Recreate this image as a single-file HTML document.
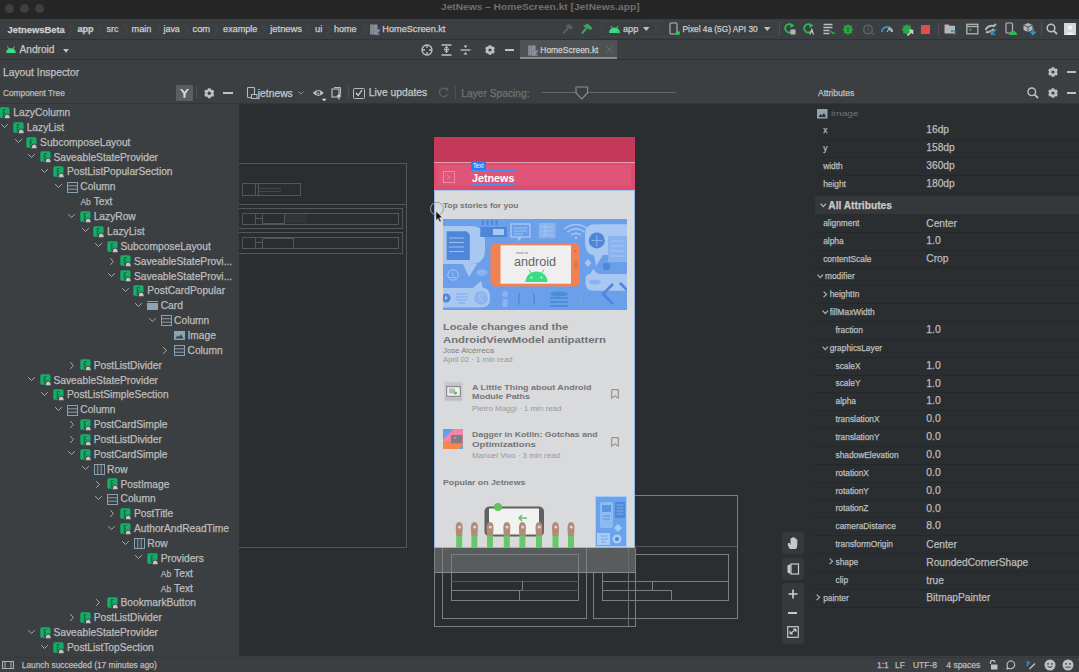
<!DOCTYPE html><html><head><meta charset="utf-8"><style>
html,body{margin:0;padding:0;width:1079px;height:672px;overflow:hidden;background:#2b2d30}
.r{position:absolute;display:block}
.t{position:absolute;white-space:nowrap;line-height:1;font-family:"Liberation Sans",sans-serif;-webkit-text-stroke:0.25px currentColor}
</style></head><body>
<div class="r" style="left:0px;top:0px;width:1079px;height:19px;background:#262626;"></div>
<div class="r" style="left:0px;top:19px;width:1079px;height:20px;background:#3c3f41;"></div>
<div class="r" style="left:0px;top:39px;width:1079px;height:1px;background:#2f3133;"></div>
<div class="r" style="left:0px;top:40px;width:1079px;height:19px;background:#3c3f41;"></div>
<div class="r" style="left:0px;top:59px;width:1079px;height:1px;background:#2f3133;"></div>
<div class="r" style="left:0px;top:60px;width:1079px;height:43px;background:#3c3f41;"></div>
<div class="r" style="left:0px;top:103px;width:239px;height:553px;background:#3c3f41;"></div>
<div class="r" style="left:239px;top:103px;width:574px;height:553px;background:#2b2e31;"></div>
<div class="r" style="left:813px;top:103px;width:266px;height:553px;background:#2b2e31;"></div>
<div class="r" style="left:0px;top:656px;width:1079px;height:16px;background:#3c3f41;"></div>
<div class="r" style="left:4.5px;top:3.7px;width:9px;height:9px;border-radius:50%;background:#3f3f3f"></div>
<div class="r" style="left:19.5px;top:3.7px;width:9px;height:9px;border-radius:50%;background:#3f3f3f"></div>
<div class="r" style="left:34.5px;top:3.7px;width:9px;height:9px;border-radius:50%;background:#3f3f3f"></div>
<div class="t" style="left:440.5px;top:3.40px;font-size:9.33px;color:#6f6f6f;font-weight:bold;transform:scaleX(1.091);transform-origin:0 0;-webkit-text-stroke:0;">JetNews – HomeScreen.kt [JetNews.app]</div>
<div class="t" style="left:7.5px;top:25.04px;font-size:9.4px;color:#cdcdcd;font-weight:bold;">JetnewsBeta</div>
<div class="t" style="left:77.5px;top:25.38px;font-size:9.0px;color:#cdcdcd;font-weight:bold;">app</div>
<div class="t" style="left:106.5px;top:25.38px;font-size:9.0px;color:#cdcdcd;">src</div>
<div class="t" style="left:131.5px;top:25.21px;font-size:9.2px;color:#cdcdcd;">main</div>
<div class="t" style="left:163.5px;top:25.47px;font-size:8.9px;color:#cdcdcd;">java</div>
<div class="t" style="left:192.5px;top:25.09px;font-size:9.35px;color:#cdcdcd;">com</div>
<div class="t" style="left:223.1px;top:25.34px;font-size:9.05px;color:#cdcdcd;">example</div>
<div class="t" style="left:270.3px;top:25.09px;font-size:9.35px;color:#cdcdcd;">jetnews</div>
<div class="t" style="left:315.0px;top:25.13px;font-size:9.3px;color:#cdcdcd;">ui</div>
<div class="t" style="left:333.9px;top:25.35px;font-size:9.04px;color:#cdcdcd;">home</div>
<div class="t" style="left:382.3px;top:25.24px;font-size:9.17px;color:#cdcdcd;">HomeScreen.kt</div>
<svg class="r" style="left:68px;top:24px;" width="6" height="11" viewBox="0 0 6 11"><path d="M1 1 L4.5 5.5 L1 10" stroke="#4b4e51" stroke-width="0.9" fill="none"/></svg>
<svg class="r" style="left:97px;top:24px;" width="6" height="11" viewBox="0 0 6 11"><path d="M1 1 L4.5 5.5 L1 10" stroke="#4b4e51" stroke-width="0.9" fill="none"/></svg>
<svg class="r" style="left:123px;top:24px;" width="6" height="11" viewBox="0 0 6 11"><path d="M1 1 L4.5 5.5 L1 10" stroke="#4b4e51" stroke-width="0.9" fill="none"/></svg>
<svg class="r" style="left:156px;top:24px;" width="6" height="11" viewBox="0 0 6 11"><path d="M1 1 L4.5 5.5 L1 10" stroke="#4b4e51" stroke-width="0.9" fill="none"/></svg>
<svg class="r" style="left:184px;top:24px;" width="6" height="11" viewBox="0 0 6 11"><path d="M1 1 L4.5 5.5 L1 10" stroke="#4b4e51" stroke-width="0.9" fill="none"/></svg>
<svg class="r" style="left:214px;top:24px;" width="6" height="11" viewBox="0 0 6 11"><path d="M1 1 L4.5 5.5 L1 10" stroke="#4b4e51" stroke-width="0.9" fill="none"/></svg>
<svg class="r" style="left:261px;top:24px;" width="6" height="11" viewBox="0 0 6 11"><path d="M1 1 L4.5 5.5 L1 10" stroke="#4b4e51" stroke-width="0.9" fill="none"/></svg>
<svg class="r" style="left:305px;top:24px;" width="6" height="11" viewBox="0 0 6 11"><path d="M1 1 L4.5 5.5 L1 10" stroke="#4b4e51" stroke-width="0.9" fill="none"/></svg>
<svg class="r" style="left:326px;top:24px;" width="6" height="11" viewBox="0 0 6 11"><path d="M1 1 L4.5 5.5 L1 10" stroke="#4b4e51" stroke-width="0.9" fill="none"/></svg>
<svg class="r" style="left:362px;top:24px;" width="6" height="11" viewBox="0 0 6 11"><path d="M1 1 L4.5 5.5 L1 10" stroke="#4b4e51" stroke-width="0.9" fill="none"/></svg>
<svg class="r" style="left:369px;top:23px;" width="12" height="13" viewBox="0 0 12 13"><path d="M1 1.5 H8.5 V11.5 H1Z" fill="#8e9296"/><path d="M2 1.5v10M4.5 1.5v10" stroke="#6d7175" stroke-width="0.7"/><path d="M5.8 6.6 H11 L5.8 12Z" fill="#26a3f0"/><path d="M11 6.6 L11 6.6 L5.8 12 V10 L9.2 6.6Z" fill="#f08030"/><path d="M5.8 12 L11 6.6 V8 L7.2 12Z" fill="#e64a72"/><path d="M5.8 12 L8.5 9.3 L11 12Z" fill="#26a3f0"/></svg>
<svg class="r" style="left:562px;top:23px;" width="13" height="12" viewBox="0 0 13 12"><path d="M3 3 L7 0.8 L11 4.5 L9 6.5 Z" fill="#5b5e61"/><path d="M6 5 L1.5 10.5" stroke="#5b5e61" stroke-width="2"/></svg>
<svg class="r" style="left:580px;top:23px;" width="14" height="12" viewBox="0 0 14 12"><path d="M3 3 L7.5 0.5 L12.5 5 L10.5 7 Z" fill="#3aa55b"/><path d="M6.5 5 L2 10.5" stroke="#3aa55b" stroke-width="2.2"/></svg>
<div class="r" style="left:601px;top:21px;width:55px;height:16px;box-sizing:border-box;border:1px solid #47494c;border-style:dotted;"></div>
<svg class="r" style="left:608px;top:24px;" width="13" height="10" viewBox="0 0 13 10"><path d="M1 9 A5.5 5.5 0 0 1 12 9Z" fill="#3ddc84"/><path d="M3 2 L4.5 4.5M10 2 L8.5 4.5" stroke="#3ddc84" stroke-width="1"/><circle cx="10.5" cy="8" r="1.6" fill="#1fd34a"/></svg>
<div class="t" style="left:623px;top:24.71px;font-size:9.2px;color:#cdcdcd;">app</div>
<svg class="r" style="left:643px;top:27px;" width="7" height="5" viewBox="0 0 7 5"><path d="M0 0 H6.5 L3.25 4Z" fill="#c0c0c0"/></svg>
<div class="r" style="left:657px;top:21px;width:121px;height:16px;box-sizing:border-box;border:1px solid #47494c;border-style:dotted;"></div>
<svg class="r" style="left:669px;top:22px;" width="12" height="14" viewBox="0 0 12 14"><rect x="1" y="1" width="7" height="11" rx="1" fill="none" stroke="#b9b9b9" stroke-width="1.1"/><circle cx="9" cy="11" r="2" fill="#1fd34a"/></svg>
<div class="t" style="left:682.5px;top:25.47px;font-size:8.31px;color:#cdcdcd;">Pixel 4a (5G) API 30</div>
<svg class="r" style="left:764px;top:27px;" width="7" height="5" viewBox="0 0 7 5"><path d="M0 0 H6.5 L3.25 4Z" fill="#c0c0c0"/></svg>
<div class="r" style="left:779px;top:22px;width:1px;height:14px;background:#4e5154;"></div>
<svg class="r" style="left:784px;top:23px;" width="12" height="12" viewBox="0 0 12 12"><path d="M8.5 2.5 A4.2 4.2 0 1 0 9.3 6.8" stroke="#2eb84f" stroke-width="1.8" fill="none"/><path d="M6 0 L10.5 2.6 L6.5 5Z" fill="#2eb84f"/><rect x="6.5" y="6.5" width="5" height="5" fill="#b5b5b5"/></svg>
<svg class="r" style="left:803px;top:23px;" width="12" height="12" viewBox="0 0 12 12"><path d="M8.5 2.5 A4.2 4.2 0 1 0 9.3 6.8" stroke="#2eb84f" stroke-width="1.8" fill="none"/><path d="M6 0 L10.5 2.6 L6.5 5Z" fill="#2eb84f"/><path d="M7 11.5 L8.8 6.5 L10.6 11.5" stroke="#c5c5c5" stroke-width="1.2" fill="none"/></svg>
<svg class="r" style="left:823px;top:23px;" width="13" height="12" viewBox="0 0 13 12"><path d="M0.5 1.5h9M0.5 4.5h9M0.5 7.5h6M0.5 10.5h6" stroke="#bdbdbd" stroke-width="1.5"/><path d="M8 8 Q9 11 12 10" stroke="#2eb84f" stroke-width="1.3" fill="none"/></svg>
<svg class="r" style="left:842px;top:23px;" width="12" height="13" viewBox="0 0 12 13"><path d="M6.00 0.90 L7.53 2.80 L9.96 2.54 L9.70 4.97 L11.60 6.50 L9.70 8.03 L9.96 10.46 L7.53 10.20 L6.00 12.10 L4.47 10.20 L2.04 10.46 L2.30 8.03 L0.40 6.50 L2.30 4.97 L2.04 2.54 L4.47 2.80Z" fill="#28a745"/><path d="M6 4v5" stroke="#17692b" stroke-width="1.2"/></svg>
<svg class="r" style="left:862px;top:23px;" width="13" height="12" viewBox="0 0 13 12"><circle cx="6" cy="6.5" r="4.3" stroke="#5f6265" stroke-width="1.6" fill="none"/><path d="M6 4.5v2.2l1.8 1.2" stroke="#5f6265" stroke-width="1" fill="none"/><path d="M9 9.5 L12 11.5" stroke="#5f6265" stroke-width="1.4"/></svg>
<svg class="r" style="left:881px;top:23px;" width="12" height="12" viewBox="0 0 12 12"><path d="M1 9 A5 5 0 0 1 11 9" stroke="#3592c4" stroke-width="2" fill="none"/><path d="M6 9 L9 4" stroke="#b5b5b5" stroke-width="1.2"/><path d="M8 6 A3 3 0 0 1 11 9" stroke="#b5b5b5" stroke-width="2" fill="none"/></svg>
<svg class="r" style="left:901px;top:23px;" width="13" height="13" viewBox="0 0 13 13"><path d="M6.00 0.90 L7.53 2.80 L9.96 2.54 L9.70 4.97 L11.60 6.50 L9.70 8.03 L9.96 10.46 L7.53 10.20 L6.00 12.10 L4.47 10.20 L2.04 10.46 L2.30 8.03 L0.40 6.50 L2.30 4.97 L2.04 2.54 L4.47 2.80Z" fill="#28a745"/><path d="M6.5 12.5 L11.5 7.5M8 7.5h3.5v3.5" stroke="#d0d0d0" stroke-width="1.6" fill="none"/></svg>
<div class="r" style="left:921px;top:25px;width:8.5px;height:8.5px;background:#db4f4f;"></div>
<div class="r" style="left:938px;top:22px;width:1px;height:14px;background:#4e5154;"></div>
<svg class="r" style="left:944px;top:23px;" width="12" height="12" viewBox="0 0 12 12"><path d="M0.5 1.5h4l1 1.3h5.5v7.7h-10.5z" fill="#b5b5b5"/><rect x="7" y="7" width="2" height="2" fill="#3592c4"/><rect x="9.5" y="9.5" width="2" height="2" fill="#3592c4"/><rect x="9.5" y="7" width="2" height="2" fill="#3592c4"/></svg>
<svg class="r" style="left:966px;top:23px;" width="13" height="12" viewBox="0 0 13 12"><rect x="0.8" y="1.3" width="11" height="9.5" fill="none" stroke="#b5b5b5" stroke-width="1.3"/><path d="M0.8 3.5h11" stroke="#b5b5b5" stroke-width="1.3"/><path d="M3.5 5 L6 6.8 L3.5 8.6Z" fill="#2eb84f"/></svg>
<svg class="r" style="left:985px;top:23px;" width="13" height="12" viewBox="0 0 13 12"><path d="M0.5 7 Q3 2 9 3 L11 1" stroke="#b5b5b5" stroke-width="2" fill="none"/><path d="M1 9 Q5 10 9 6" stroke="#b5b5b5" stroke-width="2" fill="none"/><path d="M6 11.5 L11 6.5M6.5 7.5v4h4" stroke="#3592c4" stroke-width="1.5" fill="none"/></svg>
<svg class="r" style="left:1005px;top:22px;" width="12" height="14" viewBox="0 0 12 14"><rect x="1" y="1" width="6.5" height="10" rx="1" fill="none" stroke="#b5b5b5" stroke-width="1.2"/><path d="M4 13 A4 4 0 0 1 12 13Z" fill="#2eb84f"/></svg>
<svg class="r" style="left:1023px;top:22px;" width="13" height="14" viewBox="0 0 13 14"><path d="M5 1 L9.5 3 L9.5 8 L5 10 L0.5 8 L0.5 3Z" fill="#b5b5b5"/><path d="M0.5 3 L5 5 L9.5 3M5 5v5" stroke="#3c3f41" stroke-width="0.8" fill="none"/><path d="M10 6v6M7.5 9.5 L10 12.5 L12.5 9.5" stroke="#3592c4" stroke-width="1.6" fill="none"/></svg>
<div class="r" style="left:1041px;top:22px;width:1px;height:14px;background:#4e5154;"></div>
<svg class="r" style="left:1046px;top:23px;" width="12" height="12" viewBox="0 0 12 12"><circle cx="5" cy="5" r="3.8" stroke="#c0c0c0" stroke-width="1.5" fill="none"/><path d="M7.8 7.8 L11 11" stroke="#c0c0c0" stroke-width="1.8"/></svg>
<div class="r" style="left:1064px;top:23px;width:12px;height:12px;background:#d5d5d5;"></div>
<svg class="r" style="left:1064px;top:23px;" width="12" height="12" viewBox="0 0 12 12"><circle cx="6" cy="4.5" r="2.3" fill="#f2f2f2"/><path d="M1.5 12 Q6 6 10.5 12Z" fill="#f2f2f2"/></svg>
<svg class="r" style="left:6px;top:46px;" width="10" height="8" viewBox="0 0 10 8"><path d="M0.2 7 A4.8 4.8 0 0 1 9.8 7Z" fill="#3ddc84"/><path d="M1.5 0.5 L3 3M8.5 0.5 L7 3" stroke="#3ddc84" stroke-width="1"/></svg>
<div class="t" style="left:19.5px;top:44.70px;font-size:10.16px;color:#c8c8c8;">Android</div>
<svg class="r" style="left:62.5px;top:49px;" width="7" height="5" viewBox="0 0 7 5"><path d="M0 0 H6 L3 3.8Z" fill="#c0c0c0"/></svg>
<svg class="r" style="left:421px;top:44px;" width="12" height="12" viewBox="0 0 12 12"><circle cx="6" cy="6" r="5" stroke="#c0c0c0" stroke-width="1.3" fill="none"/><path d="M6 1v3M6 8v3M1 6h3M8 6h3" stroke="#c0c0c0" stroke-width="1.3"/></svg>
<svg class="r" style="left:441px;top:44px;" width="11" height="12" viewBox="0 0 11 12"><path d="M0.5 1h10M0.5 11h10M3 5.5h5" stroke="#c0c0c0" stroke-width="1.3"/><path d="M5.5 2.5v6M3.8 4 L5.5 2.5 L7.2 4M3.8 7 L5.5 8.5 L7.2 7" stroke="#c0c0c0" stroke-width="1" fill="none"/></svg>
<svg class="r" style="left:460px;top:44px;" width="11" height="12" viewBox="0 0 11 12"><path d="M0.5 6h10" stroke="#c0c0c0" stroke-width="1.3"/><path d="M3.5 1.5 L5.5 4 L7.5 1.5ZM3.5 10.5 L5.5 8 L7.5 10.5Z" fill="#c0c0c0"/></svg>
<svg class="r" style="left:485px;top:45px;" width="10" height="10" viewBox="0 0 10 10"><g transform="scale(1.0)"><path d="M3.15 1.80 L3.88 0.13 L6.12 0.13 L6.85 1.80 L8.66 1.59 L9.78 3.54 L8.70 5.00 L9.78 6.46 L8.66 8.41 L6.85 8.20 L6.12 9.87 L3.88 9.87 L3.15 8.20 L1.34 8.41 L0.22 6.46 L1.30 5.00 L0.22 3.54 L1.34 1.59Z" fill="#c0c0c0"/><circle cx="5" cy="5" r="1.6" fill="#3c3f41"/></g></svg>
<div class="r" style="left:505px;top:49px;width:9px;height:1.6px;background:#c0c0c0;"></div>
<div class="r" style="left:520px;top:40px;width:97px;height:19px;background:#4e5254;"></div>
<div class="r" style="left:520px;top:57px;width:97px;height:2px;background:#888b8e;"></div>
<svg class="r" style="left:527px;top:44px;" width="12" height="13" viewBox="0 0 12 13"><path d="M1 1.5 H8.5 V11.5 H1Z" fill="#8e9296"/><path d="M2 1.5v10M4.5 1.5v10" stroke="#6d7175" stroke-width="0.7"/><path d="M5.8 6.6 H11 L5.8 12Z" fill="#26a3f0"/><path d="M11 6.6 L11 6.6 L5.8 12 V10 L9.2 6.6Z" fill="#f08030"/><path d="M5.8 12 L11 6.6 V8 L7.2 12Z" fill="#e64a72"/><path d="M5.8 12 L8.5 9.3 L11 12Z" fill="#26a3f0"/></svg>
<div class="t" style="left:540.3px;top:46.45px;font-size:8.45px;color:#cdcdcd;">HomeScreen.kt</div>
<svg class="r" style="left:606px;top:46px;" width="7" height="7" viewBox="0 0 7 7"><path d="M0.5 0.5 L6.5 6.5M6.5 0.5 L0.5 6.5" stroke="#686b6e" stroke-width="1"/></svg>
<div class="t" style="left:3px;top:68.18px;font-size:10.3px;color:#c0c0c0;">Layout Inspector</div>
<svg class="r" style="left:1047.5px;top:67px;" width="10" height="10" viewBox="0 0 10 10"><g transform="scale(1.0)"><path d="M3.15 1.80 L3.88 0.13 L6.12 0.13 L6.85 1.80 L8.66 1.59 L9.78 3.54 L8.70 5.00 L9.78 6.46 L8.66 8.41 L6.85 8.20 L6.12 9.87 L3.88 9.87 L3.15 8.20 L1.34 8.41 L0.22 6.46 L1.30 5.00 L0.22 3.54 L1.34 1.59Z" fill="#c0c0c0"/><circle cx="5" cy="5" r="1.6" fill="#3c3f41"/></g></svg>
<div class="r" style="left:1067px;top:71px;width:9px;height:1.8px;background:#c0c0c0;"></div>
<div class="r" style="left:176px;top:84.5px;width:16.5px;height:16px;background:#5b5e61;border-radius:1px;"></div>
<svg class="r" style="left:179px;top:87.5px;" width="11" height="11" viewBox="0 0 11 11"><path d="M1 1 H10 L6.6 5.8 V9.8 L4.4 9.8 V5.8Z" fill="#d5d5d5"/><path d="M3.2 1 L5.5 4 L7.8 1Z" fill="#5b5e61"/></svg>
<div class="r" style="left:196px;top:86px;width:1px;height:13px;background:#4e5154;"></div>
<svg class="r" style="left:203.5px;top:88px;" width="10.5" height="10.5" viewBox="0 0 10.5 10.5"><g transform="scale(1.05)"><path d="M3.15 1.80 L3.88 0.13 L6.12 0.13 L6.85 1.80 L8.66 1.59 L9.78 3.54 L8.70 5.00 L9.78 6.46 L8.66 8.41 L6.85 8.20 L6.12 9.87 L3.88 9.87 L3.15 8.20 L1.34 8.41 L0.22 6.46 L1.30 5.00 L0.22 3.54 L1.34 1.59Z" fill="#c0c0c0"/><circle cx="5" cy="5" r="1.6" fill="#3c3f41"/></g></svg>
<div class="r" style="left:223px;top:92px;width:10px;height:1.6px;background:#c0c0c0;"></div>
<div class="r" style="left:238px;top:83px;width:1px;height:20px;background:#3c3f41;"></div>
<svg class="r" style="left:246px;top:86px;" width="13" height="14" viewBox="0 0 13 14"><rect x="1.5" y="1.5" width="7" height="10" rx="0.8" fill="none" stroke="#b9b9b9" stroke-width="1.1"/><rect x="5.5" y="8.5" width="5.5" height="4" fill="#3c3f41" stroke="#b9b9b9" stroke-width="1"/></svg>
<div class="t" style="left:257.8px;top:88.58px;font-size:10.3px;color:#c8c8c8;">jetnews</div>
<svg class="r" style="left:297.5px;top:91px;" width="6" height="4" viewBox="0 0 6 4"><path d="M0.5 0.5 L3 3 L5.5 0.5" stroke="#9a9a9a" stroke-width="0.9" fill="none"/></svg>
<svg class="r" style="left:312px;top:87.5px;" width="16" height="14" viewBox="0 0 16 14"><path d="M0.8 5 Q6.3 -0.8 11.8 5 Q6.3 10.8 0.8 5Z" fill="#c4c4c4"/><circle cx="6.3" cy="5" r="2.1" fill="#3c3f41"/><circle cx="6.3" cy="5.4" r="0.9" fill="#c4c4c4"/><path d="M9.8 10.8 L12.2 13.2 L14.6 10.8Z" fill="#e0e0e0"/></svg>
<svg class="r" style="left:331px;top:87px;" width="11" height="13" viewBox="0 0 11 13"><rect x="1" y="2" width="7" height="8" fill="none" stroke="#b9b9b9" stroke-width="1.2"/><path d="M3 0.5h6.5v7" stroke="#b9b9b9" stroke-width="1" fill="none"/><path d="M8 12.5v-5M6 9.5 L8 7.5 L10 9.5" stroke="#c8c8c8" stroke-width="1.2" fill="none"/></svg>
<div class="r" style="left:348px;top:86px;width:1px;height:13px;background:#4e5154;"></div>
<div class="r" style="left:353px;top:87.5px;width:11.5px;height:11px;box-sizing:border-box;border:1px solid #b9b9b9;border-radius:1.5px;"></div>
<svg class="r" style="left:355px;top:89px;" width="8" height="8" viewBox="0 0 8 8"><path d="M1 4 L3.2 6.5 L7 1" stroke="#d0d0d0" stroke-width="1.3" fill="none"/></svg>
<div class="t" style="left:368.8px;top:88.48px;font-size:10.3px;color:#c8c8c8;">Live updates</div>
<svg class="r" style="left:438px;top:87px;" width="11" height="11" viewBox="0 0 11 11"><path d="M9 3 A4.2 4.2 0 1 0 9.5 7" stroke="#5a5d60" stroke-width="1.4" fill="none"/><path d="M7 0.5 L10.5 1 L9.5 4.5Z" fill="#5a5d60"/></svg>
<div class="r" style="left:455px;top:86px;width:1px;height:13px;background:#4e5154;"></div>
<div class="t" style="left:461.3px;top:88.53px;font-size:10.24px;color:#6f7275;">Layer Spacing:</div>
<div class="r" style="left:542px;top:91.5px;width:134px;height:1.5px;background:#65686b;"></div>
<svg class="r" style="left:575px;top:86px;" width="14" height="14" viewBox="0 0 14 14"><path d="M1 1 H12.5 V7 L6.8 13 L1 7Z" fill="#3c3f41" stroke="#8c8f92" stroke-width="1.1"/></svg>
<div class="t" style="left:818px;top:88.73px;font-size:8.59px;color:#c0c0c0;">Attributes</div>
<svg class="r" style="left:1027px;top:87px;" width="12" height="12" viewBox="0 0 12 12"><circle cx="4.8" cy="4.8" r="3.8" stroke="#c0c0c0" stroke-width="1.4" fill="none"/><path d="M7.6 7.6 L11 11" stroke="#c0c0c0" stroke-width="1.8"/></svg>
<svg class="r" style="left:1047.5px;top:88px;" width="10" height="10" viewBox="0 0 10 10"><g transform="scale(1.0)"><path d="M3.15 1.80 L3.88 0.13 L6.12 0.13 L6.85 1.80 L8.66 1.59 L9.78 3.54 L8.70 5.00 L9.78 6.46 L8.66 8.41 L6.85 8.20 L6.12 9.87 L3.88 9.87 L3.15 8.20 L1.34 8.41 L0.22 6.46 L1.30 5.00 L0.22 3.54 L1.34 1.59Z" fill="#c0c0c0"/><circle cx="5" cy="5" r="1.6" fill="#3c3f41"/></g></svg>
<div class="r" style="left:1067px;top:92px;width:9px;height:1.8px;background:#c0c0c0;"></div>
<div class="r" style="left:0px;top:103px;width:1079px;height:1px;background:#323437;"></div>
<div class="t" style="left:3px;top:88.97px;font-size:8.3px;color:#bbbbbb;">Component Tree</div>
<svg class="r" style="left:-0.7px;top:106.8px;" width="12" height="12" viewBox="0 0 12 12"><rect x="0.3" y="0.3" width="10.2" height="10.5" rx="1.6" fill="#14ad69"/><path d="M4.3 2.2v7.5M4.3 2.7h2.4M4.3 5.6h1.8" stroke="#0d6b40" stroke-width="1.1"/><path d="M4.6 11.6 L5.4 8 Q8.2 5 11 8 L11.8 11.6Z" fill="#3c3f41"/><path d="M5.6 11.3 L6.3 8.6 Q8.2 6.4 10.1 8.6 L10.8 11.3Z" fill="#c4c6c8"/></svg>
<div class="t" style="left:13.3px;top:108.05px;font-size:10.22px;color:#bdbdbd;">LazyColumn</div>
<svg class="r" style="left:0.09999999999999964px;top:123.46px;" width="9" height="6" viewBox="0 0 9 6"><path d="M1.2 1.2 L4.5 4.5 L7.8 1.2" stroke="#a9abad" stroke-width="1" fill="none"/></svg>
<svg class="r" style="left:12.700000000000001px;top:121.66px;" width="12" height="12" viewBox="0 0 12 12"><rect x="0.3" y="0.3" width="10.2" height="10.5" rx="1.6" fill="#14ad69"/><path d="M4.3 2.2v7.5M4.3 2.7h2.4M4.3 5.6h1.8" stroke="#0d6b40" stroke-width="1.1"/><path d="M4.6 11.6 L5.4 8 Q8.2 5 11 8 L11.8 11.6Z" fill="#3c3f41"/><path d="M5.6 11.3 L6.3 8.6 Q8.2 6.4 10.1 8.6 L10.8 11.3Z" fill="#c4c6c8"/></svg>
<div class="t" style="left:26.700000000000003px;top:122.91px;font-size:10.22px;color:#bdbdbd;">LazyList</div>
<svg class="r" style="left:13.5px;top:138.32px;" width="9" height="6" viewBox="0 0 9 6"><path d="M1.2 1.2 L4.5 4.5 L7.8 1.2" stroke="#a9abad" stroke-width="1" fill="none"/></svg>
<svg class="r" style="left:26.1px;top:136.51999999999998px;" width="12" height="12" viewBox="0 0 12 12"><rect x="0.3" y="0.3" width="10.2" height="10.5" rx="1.6" fill="#14ad69"/><path d="M4.3 2.2v7.5M4.3 2.7h2.4M4.3 5.6h1.8" stroke="#0d6b40" stroke-width="1.1"/><path d="M4.6 11.6 L5.4 8 Q8.2 5 11 8 L11.8 11.6Z" fill="#3c3f41"/><path d="M5.6 11.3 L6.3 8.6 Q8.2 6.4 10.1 8.6 L10.8 11.3Z" fill="#c4c6c8"/></svg>
<div class="t" style="left:40.1px;top:137.77px;font-size:10.22px;color:#bdbdbd;">SubcomposeLayout</div>
<svg class="r" style="left:26.900000000000002px;top:153.18px;" width="9" height="6" viewBox="0 0 9 6"><path d="M1.2 1.2 L4.5 4.5 L7.8 1.2" stroke="#a9abad" stroke-width="1" fill="none"/></svg>
<svg class="r" style="left:39.5px;top:151.38px;" width="12" height="12" viewBox="0 0 12 12"><rect x="0.3" y="0.3" width="10.2" height="10.5" rx="1.6" fill="#14ad69"/><path d="M4.3 2.2v7.5M4.3 2.7h2.4M4.3 5.6h1.8" stroke="#0d6b40" stroke-width="1.1"/><path d="M4.6 11.6 L5.4 8 Q8.2 5 11 8 L11.8 11.6Z" fill="#3c3f41"/><path d="M5.6 11.3 L6.3 8.6 Q8.2 6.4 10.1 8.6 L10.8 11.3Z" fill="#c4c6c8"/></svg>
<div class="t" style="left:53.5px;top:152.63px;font-size:10.22px;color:#bdbdbd;">SaveableStateProvider</div>
<svg class="r" style="left:40.3px;top:168.04px;" width="9" height="6" viewBox="0 0 9 6"><path d="M1.2 1.2 L4.5 4.5 L7.8 1.2" stroke="#a9abad" stroke-width="1" fill="none"/></svg>
<svg class="r" style="left:52.9px;top:166.23999999999998px;" width="12" height="12" viewBox="0 0 12 12"><rect x="0.3" y="0.3" width="10.2" height="10.5" rx="1.6" fill="#14ad69"/><path d="M4.3 2.2v7.5M4.3 2.7h2.4M4.3 5.6h1.8" stroke="#0d6b40" stroke-width="1.1"/><path d="M4.6 11.6 L5.4 8 Q8.2 5 11 8 L11.8 11.6Z" fill="#3c3f41"/><path d="M5.6 11.3 L6.3 8.6 Q8.2 6.4 10.1 8.6 L10.8 11.3Z" fill="#c4c6c8"/></svg>
<div class="t" style="left:66.9px;top:167.49px;font-size:10.22px;color:#bdbdbd;">PostListPopularSection</div>
<svg class="r" style="left:53.7px;top:182.89999999999998px;" width="9" height="6" viewBox="0 0 9 6"><path d="M1.2 1.2 L4.5 4.5 L7.8 1.2" stroke="#a9abad" stroke-width="1" fill="none"/></svg>
<svg class="r" style="left:67.0px;top:181.59999999999997px;" width="11" height="11" viewBox="0 0 11 11"><rect x="0.5" y="0.5" width="10" height="10" fill="none" stroke="#8ba2b3"/><path d="M0.5 3.8h10M0.5 7.2h10" stroke="#8ba2b3"/></svg>
<div class="t" style="left:80.3px;top:182.35px;font-size:10.22px;color:#bdbdbd;">Column</div>
<div class="t" style="left:80.4px;top:198.16px;font-size:8.5px;color:#b0b3b6;">Ab</div>
<div class="t" style="left:93.7px;top:197.21px;font-size:10.22px;color:#bdbdbd;">Text</div>
<svg class="r" style="left:67.10000000000001px;top:212.62px;" width="9" height="6" viewBox="0 0 9 6"><path d="M1.2 1.2 L4.5 4.5 L7.8 1.2" stroke="#a9abad" stroke-width="1" fill="none"/></svg>
<svg class="r" style="left:79.7px;top:210.82px;" width="12" height="12" viewBox="0 0 12 12"><rect x="0.3" y="0.3" width="10.2" height="10.5" rx="1.6" fill="#14ad69"/><path d="M4.3 2.2v7.5M4.3 2.7h2.4M4.3 5.6h1.8" stroke="#0d6b40" stroke-width="1.1"/><path d="M4.6 11.6 L5.4 8 Q8.2 5 11 8 L11.8 11.6Z" fill="#3c3f41"/><path d="M5.6 11.3 L6.3 8.6 Q8.2 6.4 10.1 8.6 L10.8 11.3Z" fill="#c4c6c8"/></svg>
<div class="t" style="left:93.7px;top:212.07px;font-size:10.22px;color:#bdbdbd;">LazyRow</div>
<svg class="r" style="left:80.5px;top:227.48px;" width="9" height="6" viewBox="0 0 9 6"><path d="M1.2 1.2 L4.5 4.5 L7.8 1.2" stroke="#a9abad" stroke-width="1" fill="none"/></svg>
<svg class="r" style="left:93.1px;top:225.67999999999998px;" width="12" height="12" viewBox="0 0 12 12"><rect x="0.3" y="0.3" width="10.2" height="10.5" rx="1.6" fill="#14ad69"/><path d="M4.3 2.2v7.5M4.3 2.7h2.4M4.3 5.6h1.8" stroke="#0d6b40" stroke-width="1.1"/><path d="M4.6 11.6 L5.4 8 Q8.2 5 11 8 L11.8 11.6Z" fill="#3c3f41"/><path d="M5.6 11.3 L6.3 8.6 Q8.2 6.4 10.1 8.6 L10.8 11.3Z" fill="#c4c6c8"/></svg>
<div class="t" style="left:107.1px;top:226.93px;font-size:10.22px;color:#bdbdbd;">LazyList</div>
<svg class="r" style="left:93.9px;top:242.34px;" width="9" height="6" viewBox="0 0 9 6"><path d="M1.2 1.2 L4.5 4.5 L7.8 1.2" stroke="#a9abad" stroke-width="1" fill="none"/></svg>
<svg class="r" style="left:106.5px;top:240.54px;" width="12" height="12" viewBox="0 0 12 12"><rect x="0.3" y="0.3" width="10.2" height="10.5" rx="1.6" fill="#14ad69"/><path d="M4.3 2.2v7.5M4.3 2.7h2.4M4.3 5.6h1.8" stroke="#0d6b40" stroke-width="1.1"/><path d="M4.6 11.6 L5.4 8 Q8.2 5 11 8 L11.8 11.6Z" fill="#3c3f41"/><path d="M5.6 11.3 L6.3 8.6 Q8.2 6.4 10.1 8.6 L10.8 11.3Z" fill="#c4c6c8"/></svg>
<div class="t" style="left:120.5px;top:241.79px;font-size:10.22px;color:#bdbdbd;">SubcomposeLayout</div>
<svg class="r" style="left:108.80000000000001px;top:256.7px;" width="6" height="9" viewBox="0 0 6 9"><path d="M1.2 1.2 L4.5 4.5 L1.2 7.8" stroke="#a9abad" stroke-width="1" fill="none"/></svg>
<svg class="r" style="left:119.9px;top:255.39999999999998px;" width="12" height="12" viewBox="0 0 12 12"><rect x="0.3" y="0.3" width="10.2" height="10.5" rx="1.6" fill="#14ad69"/><path d="M4.3 2.2v7.5M4.3 2.7h2.4M4.3 5.6h1.8" stroke="#0d6b40" stroke-width="1.1"/><path d="M4.6 11.6 L5.4 8 Q8.2 5 11 8 L11.8 11.6Z" fill="#3c3f41"/><path d="M5.6 11.3 L6.3 8.6 Q8.2 6.4 10.1 8.6 L10.8 11.3Z" fill="#c4c6c8"/></svg>
<div class="t" style="left:133.9px;top:256.65px;font-size:10.22px;color:#bdbdbd;">SaveableStateProvi...</div>
<svg class="r" style="left:107.30000000000001px;top:272.05999999999995px;" width="9" height="6" viewBox="0 0 9 6"><path d="M1.2 1.2 L4.5 4.5 L7.8 1.2" stroke="#a9abad" stroke-width="1" fill="none"/></svg>
<svg class="r" style="left:119.9px;top:270.25999999999993px;" width="12" height="12" viewBox="0 0 12 12"><rect x="0.3" y="0.3" width="10.2" height="10.5" rx="1.6" fill="#14ad69"/><path d="M4.3 2.2v7.5M4.3 2.7h2.4M4.3 5.6h1.8" stroke="#0d6b40" stroke-width="1.1"/><path d="M4.6 11.6 L5.4 8 Q8.2 5 11 8 L11.8 11.6Z" fill="#3c3f41"/><path d="M5.6 11.3 L6.3 8.6 Q8.2 6.4 10.1 8.6 L10.8 11.3Z" fill="#c4c6c8"/></svg>
<div class="t" style="left:133.9px;top:271.51px;font-size:10.22px;color:#bdbdbd;">SaveableStateProvi...</div>
<svg class="r" style="left:120.7px;top:286.91999999999996px;" width="9" height="6" viewBox="0 0 9 6"><path d="M1.2 1.2 L4.5 4.5 L7.8 1.2" stroke="#a9abad" stroke-width="1" fill="none"/></svg>
<svg class="r" style="left:133.3px;top:285.11999999999995px;" width="12" height="12" viewBox="0 0 12 12"><rect x="0.3" y="0.3" width="10.2" height="10.5" rx="1.6" fill="#14ad69"/><path d="M4.3 2.2v7.5M4.3 2.7h2.4M4.3 5.6h1.8" stroke="#0d6b40" stroke-width="1.1"/><path d="M4.6 11.6 L5.4 8 Q8.2 5 11 8 L11.8 11.6Z" fill="#3c3f41"/><path d="M5.6 11.3 L6.3 8.6 Q8.2 6.4 10.1 8.6 L10.8 11.3Z" fill="#c4c6c8"/></svg>
<div class="t" style="left:147.3px;top:286.37px;font-size:10.22px;color:#bdbdbd;">PostCardPopular</div>
<svg class="r" style="left:134.1px;top:301.78px;" width="9" height="6" viewBox="0 0 9 6"><path d="M1.2 1.2 L4.5 4.5 L7.8 1.2" stroke="#a9abad" stroke-width="1" fill="none"/></svg>
<svg class="r" style="left:147.4px;top:300.47999999999996px;" width="11" height="11" viewBox="0 0 11 11"><rect x="0" y="1" width="11" height="9" fill="#8ba2b3"/><path d="M0 2.5h11" stroke="#3c3f41"/></svg>
<div class="t" style="left:160.70000000000002px;top:301.23px;font-size:10.22px;color:#bdbdbd;">Card</div>
<svg class="r" style="left:147.5px;top:316.64px;" width="9" height="6" viewBox="0 0 9 6"><path d="M1.2 1.2 L4.5 4.5 L7.8 1.2" stroke="#a9abad" stroke-width="1" fill="none"/></svg>
<svg class="r" style="left:160.8px;top:315.34px;" width="11" height="11" viewBox="0 0 11 11"><rect x="0.5" y="0.5" width="10" height="10" fill="none" stroke="#8ba2b3"/><path d="M0.5 3.8h10M0.5 7.2h10" stroke="#8ba2b3"/></svg>
<div class="t" style="left:174.10000000000002px;top:316.09px;font-size:10.22px;color:#bdbdbd;">Column</div>
<svg class="r" style="left:174.20000000000002px;top:330.2px;" width="11" height="11" viewBox="0 0 11 11"><rect x="0" y="1" width="11" height="9" fill="#8ba2b3"/><path d="M1.5 8.5 L3.5 5.5 L5 7 L7 4.5 L9.5 8.5Z" fill="#3c3f41"/></svg>
<div class="t" style="left:187.50000000000003px;top:330.95px;font-size:10.22px;color:#bdbdbd;">Image</div>
<svg class="r" style="left:162.4px;top:345.86px;" width="6" height="9" viewBox="0 0 6 9"><path d="M1.2 1.2 L4.5 4.5 L1.2 7.8" stroke="#a9abad" stroke-width="1" fill="none"/></svg>
<svg class="r" style="left:174.20000000000002px;top:345.06px;" width="11" height="11" viewBox="0 0 11 11"><rect x="0.5" y="0.5" width="10" height="10" fill="none" stroke="#8ba2b3"/><path d="M0.5 3.8h10M0.5 7.2h10" stroke="#8ba2b3"/></svg>
<div class="t" style="left:187.50000000000003px;top:345.81px;font-size:10.22px;color:#bdbdbd;">Column</div>
<svg class="r" style="left:68.60000000000001px;top:360.72px;" width="6" height="9" viewBox="0 0 6 9"><path d="M1.2 1.2 L4.5 4.5 L1.2 7.8" stroke="#a9abad" stroke-width="1" fill="none"/></svg>
<svg class="r" style="left:79.7px;top:359.42px;" width="12" height="12" viewBox="0 0 12 12"><rect x="0.3" y="0.3" width="10.2" height="10.5" rx="1.6" fill="#14ad69"/><path d="M4.3 2.2v7.5M4.3 2.7h2.4M4.3 5.6h1.8" stroke="#0d6b40" stroke-width="1.1"/><path d="M4.6 11.6 L5.4 8 Q8.2 5 11 8 L11.8 11.6Z" fill="#3c3f41"/><path d="M5.6 11.3 L6.3 8.6 Q8.2 6.4 10.1 8.6 L10.8 11.3Z" fill="#c4c6c8"/></svg>
<div class="t" style="left:93.7px;top:360.67px;font-size:10.22px;color:#bdbdbd;">PostListDivider</div>
<svg class="r" style="left:26.900000000000002px;top:376.08000000000004px;" width="9" height="6" viewBox="0 0 9 6"><path d="M1.2 1.2 L4.5 4.5 L7.8 1.2" stroke="#a9abad" stroke-width="1" fill="none"/></svg>
<svg class="r" style="left:39.5px;top:374.28000000000003px;" width="12" height="12" viewBox="0 0 12 12"><rect x="0.3" y="0.3" width="10.2" height="10.5" rx="1.6" fill="#14ad69"/><path d="M4.3 2.2v7.5M4.3 2.7h2.4M4.3 5.6h1.8" stroke="#0d6b40" stroke-width="1.1"/><path d="M4.6 11.6 L5.4 8 Q8.2 5 11 8 L11.8 11.6Z" fill="#3c3f41"/><path d="M5.6 11.3 L6.3 8.6 Q8.2 6.4 10.1 8.6 L10.8 11.3Z" fill="#c4c6c8"/></svg>
<div class="t" style="left:53.5px;top:375.53px;font-size:10.22px;color:#bdbdbd;">SaveableStateProvider</div>
<svg class="r" style="left:40.3px;top:390.93999999999994px;" width="9" height="6" viewBox="0 0 9 6"><path d="M1.2 1.2 L4.5 4.5 L7.8 1.2" stroke="#a9abad" stroke-width="1" fill="none"/></svg>
<svg class="r" style="left:52.9px;top:389.13999999999993px;" width="12" height="12" viewBox="0 0 12 12"><rect x="0.3" y="0.3" width="10.2" height="10.5" rx="1.6" fill="#14ad69"/><path d="M4.3 2.2v7.5M4.3 2.7h2.4M4.3 5.6h1.8" stroke="#0d6b40" stroke-width="1.1"/><path d="M4.6 11.6 L5.4 8 Q8.2 5 11 8 L11.8 11.6Z" fill="#3c3f41"/><path d="M5.6 11.3 L6.3 8.6 Q8.2 6.4 10.1 8.6 L10.8 11.3Z" fill="#c4c6c8"/></svg>
<div class="t" style="left:66.9px;top:390.39px;font-size:10.22px;color:#bdbdbd;">PostListSimpleSection</div>
<svg class="r" style="left:53.7px;top:405.79999999999995px;" width="9" height="6" viewBox="0 0 9 6"><path d="M1.2 1.2 L4.5 4.5 L7.8 1.2" stroke="#a9abad" stroke-width="1" fill="none"/></svg>
<svg class="r" style="left:67.0px;top:404.49999999999994px;" width="11" height="11" viewBox="0 0 11 11"><rect x="0.5" y="0.5" width="10" height="10" fill="none" stroke="#8ba2b3"/><path d="M0.5 3.8h10M0.5 7.2h10" stroke="#8ba2b3"/></svg>
<div class="t" style="left:80.3px;top:405.25px;font-size:10.22px;color:#bdbdbd;">Column</div>
<svg class="r" style="left:68.60000000000001px;top:420.15999999999997px;" width="6" height="9" viewBox="0 0 6 9"><path d="M1.2 1.2 L4.5 4.5 L1.2 7.8" stroke="#a9abad" stroke-width="1" fill="none"/></svg>
<svg class="r" style="left:79.7px;top:418.85999999999996px;" width="12" height="12" viewBox="0 0 12 12"><rect x="0.3" y="0.3" width="10.2" height="10.5" rx="1.6" fill="#14ad69"/><path d="M4.3 2.2v7.5M4.3 2.7h2.4M4.3 5.6h1.8" stroke="#0d6b40" stroke-width="1.1"/><path d="M4.6 11.6 L5.4 8 Q8.2 5 11 8 L11.8 11.6Z" fill="#3c3f41"/><path d="M5.6 11.3 L6.3 8.6 Q8.2 6.4 10.1 8.6 L10.8 11.3Z" fill="#c4c6c8"/></svg>
<div class="t" style="left:93.7px;top:420.11px;font-size:10.22px;color:#bdbdbd;">PostCardSimple</div>
<svg class="r" style="left:68.60000000000001px;top:435.02px;" width="6" height="9" viewBox="0 0 6 9"><path d="M1.2 1.2 L4.5 4.5 L1.2 7.8" stroke="#a9abad" stroke-width="1" fill="none"/></svg>
<svg class="r" style="left:79.7px;top:433.71999999999997px;" width="12" height="12" viewBox="0 0 12 12"><rect x="0.3" y="0.3" width="10.2" height="10.5" rx="1.6" fill="#14ad69"/><path d="M4.3 2.2v7.5M4.3 2.7h2.4M4.3 5.6h1.8" stroke="#0d6b40" stroke-width="1.1"/><path d="M4.6 11.6 L5.4 8 Q8.2 5 11 8 L11.8 11.6Z" fill="#3c3f41"/><path d="M5.6 11.3 L6.3 8.6 Q8.2 6.4 10.1 8.6 L10.8 11.3Z" fill="#c4c6c8"/></svg>
<div class="t" style="left:93.7px;top:434.97px;font-size:10.22px;color:#bdbdbd;">PostListDivider</div>
<svg class="r" style="left:67.10000000000001px;top:450.38px;" width="9" height="6" viewBox="0 0 9 6"><path d="M1.2 1.2 L4.5 4.5 L7.8 1.2" stroke="#a9abad" stroke-width="1" fill="none"/></svg>
<svg class="r" style="left:79.7px;top:448.58px;" width="12" height="12" viewBox="0 0 12 12"><rect x="0.3" y="0.3" width="10.2" height="10.5" rx="1.6" fill="#14ad69"/><path d="M4.3 2.2v7.5M4.3 2.7h2.4M4.3 5.6h1.8" stroke="#0d6b40" stroke-width="1.1"/><path d="M4.6 11.6 L5.4 8 Q8.2 5 11 8 L11.8 11.6Z" fill="#3c3f41"/><path d="M5.6 11.3 L6.3 8.6 Q8.2 6.4 10.1 8.6 L10.8 11.3Z" fill="#c4c6c8"/></svg>
<div class="t" style="left:93.7px;top:449.83px;font-size:10.22px;color:#bdbdbd;">PostCardSimple</div>
<svg class="r" style="left:80.5px;top:465.24px;" width="9" height="6" viewBox="0 0 9 6"><path d="M1.2 1.2 L4.5 4.5 L7.8 1.2" stroke="#a9abad" stroke-width="1" fill="none"/></svg>
<svg class="r" style="left:93.8px;top:463.94px;" width="11" height="11" viewBox="0 0 11 11"><rect x="0.5" y="0.5" width="10" height="10" fill="none" stroke="#8ba2b3"/><path d="M3.8 0.5v10M7.2 0.5v10" stroke="#8ba2b3"/></svg>
<div class="t" style="left:107.1px;top:464.69px;font-size:10.22px;color:#bdbdbd;">Row</div>
<svg class="r" style="left:95.4px;top:479.6px;" width="6" height="9" viewBox="0 0 6 9"><path d="M1.2 1.2 L4.5 4.5 L1.2 7.8" stroke="#a9abad" stroke-width="1" fill="none"/></svg>
<svg class="r" style="left:106.5px;top:478.3px;" width="12" height="12" viewBox="0 0 12 12"><rect x="0.3" y="0.3" width="10.2" height="10.5" rx="1.6" fill="#14ad69"/><path d="M4.3 2.2v7.5M4.3 2.7h2.4M4.3 5.6h1.8" stroke="#0d6b40" stroke-width="1.1"/><path d="M4.6 11.6 L5.4 8 Q8.2 5 11 8 L11.8 11.6Z" fill="#3c3f41"/><path d="M5.6 11.3 L6.3 8.6 Q8.2 6.4 10.1 8.6 L10.8 11.3Z" fill="#c4c6c8"/></svg>
<div class="t" style="left:120.5px;top:479.55px;font-size:10.22px;color:#bdbdbd;">PostImage</div>
<svg class="r" style="left:93.9px;top:494.96000000000004px;" width="9" height="6" viewBox="0 0 9 6"><path d="M1.2 1.2 L4.5 4.5 L7.8 1.2" stroke="#a9abad" stroke-width="1" fill="none"/></svg>
<svg class="r" style="left:107.2px;top:493.66px;" width="11" height="11" viewBox="0 0 11 11"><rect x="0.5" y="0.5" width="10" height="10" fill="none" stroke="#8ba2b3"/><path d="M0.5 3.8h10M0.5 7.2h10" stroke="#8ba2b3"/></svg>
<div class="t" style="left:120.5px;top:494.41px;font-size:10.22px;color:#bdbdbd;">Column</div>
<svg class="r" style="left:108.80000000000001px;top:509.31999999999994px;" width="6" height="9" viewBox="0 0 6 9"><path d="M1.2 1.2 L4.5 4.5 L1.2 7.8" stroke="#a9abad" stroke-width="1" fill="none"/></svg>
<svg class="r" style="left:119.9px;top:508.0199999999999px;" width="12" height="12" viewBox="0 0 12 12"><rect x="0.3" y="0.3" width="10.2" height="10.5" rx="1.6" fill="#14ad69"/><path d="M4.3 2.2v7.5M4.3 2.7h2.4M4.3 5.6h1.8" stroke="#0d6b40" stroke-width="1.1"/><path d="M4.6 11.6 L5.4 8 Q8.2 5 11 8 L11.8 11.6Z" fill="#3c3f41"/><path d="M5.6 11.3 L6.3 8.6 Q8.2 6.4 10.1 8.6 L10.8 11.3Z" fill="#c4c6c8"/></svg>
<div class="t" style="left:133.9px;top:509.27px;font-size:10.22px;color:#bdbdbd;">PostTitle</div>
<svg class="r" style="left:107.30000000000001px;top:524.68px;" width="9" height="6" viewBox="0 0 9 6"><path d="M1.2 1.2 L4.5 4.5 L7.8 1.2" stroke="#a9abad" stroke-width="1" fill="none"/></svg>
<svg class="r" style="left:119.9px;top:522.88px;" width="12" height="12" viewBox="0 0 12 12"><rect x="0.3" y="0.3" width="10.2" height="10.5" rx="1.6" fill="#14ad69"/><path d="M4.3 2.2v7.5M4.3 2.7h2.4M4.3 5.6h1.8" stroke="#0d6b40" stroke-width="1.1"/><path d="M4.6 11.6 L5.4 8 Q8.2 5 11 8 L11.8 11.6Z" fill="#3c3f41"/><path d="M5.6 11.3 L6.3 8.6 Q8.2 6.4 10.1 8.6 L10.8 11.3Z" fill="#c4c6c8"/></svg>
<div class="t" style="left:133.9px;top:524.13px;font-size:10.22px;color:#bdbdbd;">AuthorAndReadTime</div>
<svg class="r" style="left:120.7px;top:539.54px;" width="9" height="6" viewBox="0 0 9 6"><path d="M1.2 1.2 L4.5 4.5 L7.8 1.2" stroke="#a9abad" stroke-width="1" fill="none"/></svg>
<svg class="r" style="left:134.0px;top:538.24px;" width="11" height="11" viewBox="0 0 11 11"><rect x="0.5" y="0.5" width="10" height="10" fill="none" stroke="#8ba2b3"/><path d="M3.8 0.5v10M7.2 0.5v10" stroke="#8ba2b3"/></svg>
<div class="t" style="left:147.3px;top:538.99px;font-size:10.22px;color:#bdbdbd;">Row</div>
<svg class="r" style="left:134.1px;top:554.4px;" width="9" height="6" viewBox="0 0 9 6"><path d="M1.2 1.2 L4.5 4.5 L7.8 1.2" stroke="#a9abad" stroke-width="1" fill="none"/></svg>
<svg class="r" style="left:146.70000000000002px;top:552.6px;" width="12" height="12" viewBox="0 0 12 12"><rect x="0.3" y="0.3" width="10.2" height="10.5" rx="1.6" fill="#14ad69"/><path d="M4.3 2.2v7.5M4.3 2.7h2.4M4.3 5.6h1.8" stroke="#0d6b40" stroke-width="1.1"/><path d="M4.6 11.6 L5.4 8 Q8.2 5 11 8 L11.8 11.6Z" fill="#3c3f41"/><path d="M5.6 11.3 L6.3 8.6 Q8.2 6.4 10.1 8.6 L10.8 11.3Z" fill="#c4c6c8"/></svg>
<div class="t" style="left:160.70000000000002px;top:553.85px;font-size:10.22px;color:#bdbdbd;">Providers</div>
<div class="t" style="left:160.8px;top:569.66px;font-size:8.5px;color:#b0b3b6;">Ab</div>
<div class="t" style="left:174.10000000000002px;top:568.71px;font-size:10.22px;color:#bdbdbd;">Text</div>
<div class="t" style="left:160.8px;top:584.52px;font-size:8.5px;color:#b0b3b6;">Ab</div>
<div class="t" style="left:174.10000000000002px;top:583.57px;font-size:10.22px;color:#bdbdbd;">Text</div>
<svg class="r" style="left:95.4px;top:598.48px;" width="6" height="9" viewBox="0 0 6 9"><path d="M1.2 1.2 L4.5 4.5 L1.2 7.8" stroke="#a9abad" stroke-width="1" fill="none"/></svg>
<svg class="r" style="left:106.5px;top:597.1800000000001px;" width="12" height="12" viewBox="0 0 12 12"><rect x="0.3" y="0.3" width="10.2" height="10.5" rx="1.6" fill="#14ad69"/><path d="M4.3 2.2v7.5M4.3 2.7h2.4M4.3 5.6h1.8" stroke="#0d6b40" stroke-width="1.1"/><path d="M4.6 11.6 L5.4 8 Q8.2 5 11 8 L11.8 11.6Z" fill="#3c3f41"/><path d="M5.6 11.3 L6.3 8.6 Q8.2 6.4 10.1 8.6 L10.8 11.3Z" fill="#c4c6c8"/></svg>
<div class="t" style="left:120.5px;top:598.43px;font-size:10.22px;color:#bdbdbd;">BookmarkButton</div>
<svg class="r" style="left:68.60000000000001px;top:613.34px;" width="6" height="9" viewBox="0 0 6 9"><path d="M1.2 1.2 L4.5 4.5 L1.2 7.8" stroke="#a9abad" stroke-width="1" fill="none"/></svg>
<svg class="r" style="left:79.7px;top:612.0400000000001px;" width="12" height="12" viewBox="0 0 12 12"><rect x="0.3" y="0.3" width="10.2" height="10.5" rx="1.6" fill="#14ad69"/><path d="M4.3 2.2v7.5M4.3 2.7h2.4M4.3 5.6h1.8" stroke="#0d6b40" stroke-width="1.1"/><path d="M4.6 11.6 L5.4 8 Q8.2 5 11 8 L11.8 11.6Z" fill="#3c3f41"/><path d="M5.6 11.3 L6.3 8.6 Q8.2 6.4 10.1 8.6 L10.8 11.3Z" fill="#c4c6c8"/></svg>
<div class="t" style="left:93.7px;top:613.29px;font-size:10.22px;color:#bdbdbd;">PostListDivider</div>
<svg class="r" style="left:26.900000000000002px;top:628.7px;" width="9" height="6" viewBox="0 0 9 6"><path d="M1.2 1.2 L4.5 4.5 L7.8 1.2" stroke="#a9abad" stroke-width="1" fill="none"/></svg>
<svg class="r" style="left:39.5px;top:626.9000000000001px;" width="12" height="12" viewBox="0 0 12 12"><rect x="0.3" y="0.3" width="10.2" height="10.5" rx="1.6" fill="#14ad69"/><path d="M4.3 2.2v7.5M4.3 2.7h2.4M4.3 5.6h1.8" stroke="#0d6b40" stroke-width="1.1"/><path d="M4.6 11.6 L5.4 8 Q8.2 5 11 8 L11.8 11.6Z" fill="#3c3f41"/><path d="M5.6 11.3 L6.3 8.6 Q8.2 6.4 10.1 8.6 L10.8 11.3Z" fill="#c4c6c8"/></svg>
<div class="t" style="left:53.5px;top:628.15px;font-size:10.22px;color:#bdbdbd;">SaveableStateProvider</div>
<svg class="r" style="left:40.3px;top:643.5600000000001px;" width="9" height="6" viewBox="0 0 9 6"><path d="M1.2 1.2 L4.5 4.5 L7.8 1.2" stroke="#a9abad" stroke-width="1" fill="none"/></svg>
<svg class="r" style="left:52.9px;top:641.7600000000001px;" width="12" height="12" viewBox="0 0 12 12"><rect x="0.3" y="0.3" width="10.2" height="10.5" rx="1.6" fill="#14ad69"/><path d="M4.3 2.2v7.5M4.3 2.7h2.4M4.3 5.6h1.8" stroke="#0d6b40" stroke-width="1.1"/><path d="M4.6 11.6 L5.4 8 Q8.2 5 11 8 L11.8 11.6Z" fill="#3c3f41"/><path d="M5.6 11.3 L6.3 8.6 Q8.2 6.4 10.1 8.6 L10.8 11.3Z" fill="#c4c6c8"/></svg>
<div class="t" style="left:66.9px;top:643.01px;font-size:10.22px;color:#bdbdbd;">PostListTopSection</div>
<div class="r" style="left:239px;top:162.5px;width:168px;height:385px;box-sizing:border-box;border:1px solid #54575a;border-left:none;"></div>
<div class="r" style="left:239px;top:204px;width:167px;height:1px;background:#54575a;"></div>
<div class="r" style="left:241.5px;top:183px;width:59px;height:13px;box-sizing:border-box;border:1px solid #54575a;"></div>
<div class="r" style="left:254.5px;top:183px;width:1px;height:13px;background:#54575a;"></div>
<div class="r" style="left:258px;top:183px;width:1px;height:13px;background:#54575a;"></div>
<div class="r" style="left:259px;top:188px;width:22px;height:1px;background:#44474a;"></div>
<div class="r" style="left:259px;top:190.5px;width:22px;height:1px;background:#44474a;"></div>
<div class="r" style="left:239px;top:208px;width:163.5px;height:21px;box-sizing:border-box;border:1px solid #54575a;border-left:none;"></div>
<div class="r" style="left:241.5px;top:212.5px;width:157px;height:12px;box-sizing:border-box;border:1px solid #54575a;"></div>
<div class="r" style="left:255px;top:212.5px;width:1px;height:12px;background:#54575a;"></div>
<div class="r" style="left:256px;top:218px;width:6px;height:1px;background:#54575a;"></div>
<div class="r" style="left:261.5px;top:213px;width:23px;height:11px;box-sizing:border-box;border:1px solid #54575a;"></div>
<div class="r" style="left:284.5px;top:214px;width:22px;height:9px;background:#323538;"></div>
<div class="r" style="left:239px;top:232px;width:163.5px;height:22px;box-sizing:border-box;border:1px solid #54575a;border-left:none;"></div>
<div class="r" style="left:241.5px;top:236.5px;width:157px;height:12.5px;box-sizing:border-box;border:1px solid #54575a;"></div>
<div class="r" style="left:255px;top:236.5px;width:1px;height:12.5px;background:#54575a;"></div>
<div class="r" style="left:256px;top:242px;width:6px;height:1px;background:#54575a;"></div>
<div class="r" style="left:261.5px;top:237.5px;width:32px;height:11px;box-sizing:border-box;border:1px solid #54575a;"></div>
<div class="r" style="left:593px;top:495px;width:144.5px;height:123.5px;box-sizing:border-box;border:1px solid #7d8083;"></div>
<div class="r" style="left:593px;top:546px;width:144px;height:1px;background:#55585a;"></div>
<div class="r" style="left:602px;top:554px;width:127px;height:46.5px;box-sizing:border-box;border:1px solid #7d8083;"></div>
<div class="r" style="left:602px;top:581px;width:127px;height:1px;background:#7d8083;"></div>
<div class="r" style="left:602px;top:590px;width:70px;height:1px;background:#7d8083;"></div>
<div class="r" style="left:652px;top:581px;width:1px;height:9px;background:#7d8083;"></div>
<div class="r" style="left:671px;top:590px;width:1px;height:10px;background:#7d8083;"></div>
<div class="r" style="left:434px;top:137px;width:201px;height:25px;background:#c4385a;"></div>
<div class="r" style="left:434px;top:161.5px;width:201px;height:29px;background:#de4c70;"></div>
<div class="r" style="left:434px;top:161.5px;width:201px;height:1.3px;background:#eba0b2;"></div>
<div class="r" style="left:438px;top:165px;width:193px;height:21px;background:rgba(255,255,255,0.05);"></div>
<div class="r" style="left:443px;top:171px;width:12px;height:12px;box-sizing:border-box;border:1px solid #eb8ea4;"></div>
<svg class="r" style="left:446px;top:174px;" width="6" height="6" viewBox="0 0 6 6"><path d="M1 1 L4 3 L1 5" stroke="#eb8ea4" stroke-width="0.8" fill="none"/></svg>
<div class="t" style="left:472.3px;top:172.91px;font-size:10.97px;color:#ffffff;font-weight:bold;transform:scaleX(0.981);transform-origin:0 0;-webkit-text-stroke:0;">Jetnews</div>
<div class="r" style="left:471px;top:170px;width:45px;height:15px;box-sizing:border-box;border:1px solid #4a8ff0;border-width:1.3px;"></div>
<div class="r" style="left:471px;top:161px;width:14.5px;height:9px;background:#2f7bf0;"></div>
<div class="t" style="left:473px;top:162.96px;font-size:6.31px;color:#ffffff;transform:scaleX(0.907);transform-origin:0 0;-webkit-text-stroke:0;">Text</div>
<div class="r" style="left:434px;top:190.5px;width:201px;height:357px;background:#d9dadb;"></div>
<div class="r" style="left:434px;top:190.5px;width:1.2px;height:357px;background:#8fb7e8;"></div>
<div class="r" style="left:633.8px;top:190.5px;width:1.2px;height:357px;background:#8fb7e8;"></div>
<div class="r" style="left:434px;top:546.5px;width:201px;height:1.5px;background:#8fb7e8;"></div>
<div class="r" style="left:434px;top:190.3px;width:201px;height:1.2px;background:#a9c6ea;"></div>
<div class="t" style="left:443px;top:202.45px;font-size:8.09px;color:#747577;font-weight:bold;transform:scaleX(1.039);transform-origin:0 0;-webkit-text-stroke:0;">Top stories for you</div>
<svg class="r" style="left:442.5px;top:219px" width="184" height="91" viewBox="0 0 184 91"><rect width="184" height="91" fill="#6b9fe9"/><path d="M0 7 H28 Q42 7 42 22 V31 Q42 45 28 45 H34 L26 58 L20 45 H0Z" fill="#a8c7f1"/><path d="M3.7 12.3 H23.5 L26.8 15.6 V41 H3.7Z" fill="#4f86d8"/><path d="M6 19h15M6 23.5h15M6 28h15M6 32.5h15" stroke="#a8c7f1" stroke-width="0.9"/><circle cx="10" cy="56" r="5.2" fill="none" stroke="#a8c7f1" stroke-width="1"/><path d="M7 58.5h6M10 53.5v3" stroke="#a8c7f1" stroke-width="0.9"/><ellipse cx="39" cy="53.5" rx="5.5" ry="3.3" fill="#8bb4ee"/><path d="M0 69 H30 L38 62 L40 69 Q47 69 47 78 V80 Q47 88.5 38 88.5 H0Z" fill="#a8c7f1"/><circle cx="3" cy="79" r="4.5" fill="#4f86d8"/><path d="M2 76.5 L5 79 L2 81.5Z" fill="#a8c7f1"/><path d="M13 75h12M13 78h12M13 81h12M16 84h6" stroke="#8bb4ee" stroke-width="1.3"/><circle cx="38" cy="79" r="6.8" fill="#8bb4ee"/><circle cx="38" cy="77" r="2" fill="none" stroke="#a8c7f1" stroke-width="0.9"/><path d="M34.5 83 Q38 79 41.5 83" stroke="#a8c7f1" stroke-width="0.9" fill="none"/><path d="M40 1v5M44.5 1v5M49 1v5M53.5 1v5" stroke="#4f86d8" stroke-width="2"/><rect x="37.3" y="8" width="26.5" height="10" fill="#4f86d8"/><rect x="50" y="10" width="11" height="6" fill="#a8c7f1"/><rect x="68" y="5" width="19" height="13" fill="none" stroke="#a8c7f1" stroke-width="1.4"/><path d="M71 9h13M71 12h13M71 15h9" stroke="#a8c7f1" stroke-width="0.9"/><path d="M74 18 L76 22 L79 18Z" fill="#a8c7f1"/><rect x="95.8" y="3.9" width="16.7" height="15.4" fill="#8bb4ee"/><path d="M98 8h12M98 12h12M98 16h12M102 5v13" stroke="#a8c7f1" stroke-width="0.8"/><path d="M121 10 Q133 1 145 10M124.5 13 Q133 6.5 141.5 13M128 16 Q133 12.5 138 16" stroke="#a8c7f1" stroke-width="1.5" fill="none"/><circle cx="133" cy="19" r="1.3" fill="#a8c7f1"/><path d="M152 5.3 H184 V36 H160 L153 47 L151 36 Q142 36 142 22 V15 Q142 5.3 152 5.3Z" fill="#a8c7f1"/><circle cx="153.8" cy="21.4" r="8" fill="#4f86d8"/><path d="M153.8 16v11M148.5 21.4h11" stroke="#8bb4ee" stroke-width="1"/><rect x="165" y="17" width="19" height="26" fill="#8bb4ee"/><path d="M168 22h13M168 27h13M168 32h13M168 37h13" stroke="#a8c7f1" stroke-width="0.9"/><path d="M145 40 L148.5 44 L145 48 L141.5 44Z" fill="#a8c7f1"/><circle cx="163.5" cy="47.5" r="3.8" fill="#4f86d8"/><path d="M150 50 L155 55 H184 V71.7 H150 Q142.5 71.7 142.5 63.5 V61 Q142.5 55 147 55Z" fill="#a8c7f1"/><ellipse cx="152" cy="63" rx="6" ry="2.5" fill="#8bb4ee"/><path d="M170 65 L160 75 L170 85" stroke="#4f86d8" stroke-width="2.5" fill="none"/><path d="M177 64 L184 71" stroke="#4f86d8" stroke-width="2.5" fill="none"/><ellipse cx="116" cy="75" rx="9" ry="2.5" fill="#4a90d9"/><path d="M107 79h18M107 83h18M107 87h18" stroke="#4a90d9" stroke-width="2"/><path d="M138 75v1M138 79v1M138 83v1M138 87v1" stroke="#8bb4ee" stroke-width="1.4"/><path d="M77 74 Q74 80 77 86M90 74 Q93 80 90 86" stroke="#4f86d8" stroke-width="1.3" fill="none"/><circle cx="62" cy="75" r="3" fill="#8bb4ee"/><rect x="59.5" y="80" width="5" height="8" fill="#8bb4ee"/><path d="M47.5 30 Q47.5 24.2 53 24.2 H131 Q137 24.2 137 30 V61.5 Q137 67.5 131 67.5 H53 Q47.5 67.5 47.5 61.5Z" fill="#f08252"/><rect x="57.5" y="26.3" width="70.5" height="38.4" fill="#efefef"/><circle cx="132.5" cy="32" r="1" fill="#c96a44"/><path d="M133 42v8" stroke="#c96a44" stroke-width="1.2"/><text x="71" y="46.5" font-family="Liberation Sans" font-size="12.3" fill="#62676b" textLength="42" lengthAdjust="spacingAndGlyphs">android</text><text x="73" y="34.5" font-family="Liberation Sans" font-size="4.2" fill="#6f7478">now in</text><path d="M82.5 63 A11 10.5 0 0 1 104.5 63Z" fill="#3ddc84"/><path d="M86 50.5 L88 54M101 50.5 L99 54" stroke="#3ddc84" stroke-width="1"/><circle cx="88.5" cy="58.5" r="0.9" fill="#efefef"/><circle cx="98.5" cy="58.5" r="0.9" fill="#efefef"/></svg>
<div class="t" style="left:442.6px;top:322.19px;font-size:9.47px;color:#717274;font-weight:bold;transform:scaleX(1.165);transform-origin:0 0;-webkit-text-stroke:0;">Locale changes and the</div>
<div class="t" style="left:442.6px;top:334.79px;font-size:9.47px;color:#717274;font-weight:bold;transform:scaleX(1.192);transform-origin:0 0;-webkit-text-stroke:0;">AndroidViewModel antipattern</div>
<div class="t" style="left:442.6px;top:347.35px;font-size:7.27px;color:#7d7e80;transform:scaleX(1.070);transform-origin:0 0;-webkit-text-stroke:0;">Jose Alcérreca</div>
<div class="t" style="left:442.6px;top:357.39px;font-size:6.86px;color:#97989a;transform:scaleX(1.125);transform-origin:0 0;-webkit-text-stroke:0;">April 02 · 1 min read</div>
<svg class="r" style="left:444px;top:381px" width="19" height="21" viewBox="0 0 19 21"><rect x="0" y="0.5" width="19" height="20" fill="#cfd0d1"/><rect x="1" y="2" width="17" height="3" fill="#c4c5c6"/><rect x="2" y="5" width="15" height="11" fill="#8a8c8e"/><rect x="3.2" y="6.2" width="12.6" height="8.6" fill="#f0f0f0"/><rect x="5" y="7.5" width="6" height="5" fill="#b9babb"/><circle cx="11.5" cy="12" r="1.6" fill="#45c845"/><rect x="1" y="16.5" width="17" height="3" fill="#bdbebf"/></svg>
<div class="t" style="left:472px;top:383.57px;font-size:7.96px;color:#747577;font-weight:bold;transform:scaleX(1.119);transform-origin:0 0;-webkit-text-stroke:0;">A Little Thing about Android</div>
<div class="t" style="left:472px;top:393.07px;font-size:7.96px;color:#747577;font-weight:bold;transform:scaleX(1.122);transform-origin:0 0;-webkit-text-stroke:0;">Module Paths</div>
<div class="t" style="left:472px;top:404.55px;font-size:7.27px;color:#98999b;transform:scaleX(1.097);transform-origin:0 0;-webkit-text-stroke:0;">Pietro Maggi · 1 min read</div>
<svg class="r" style="left:611px;top:389px;" width="8" height="10" viewBox="0 0 8 10"><path d="M0.7 0.7 H7.3 V9.3 L4 6.8 L0.7 9.3Z" fill="none" stroke="#7e7f81" stroke-width="0.95"/></svg>
<svg class="r" style="left:442.7px;top:429px" width="20.5" height="20" viewBox="0 0 20.5 20"><rect width="20.5" height="20" fill="#f28a9e"/><path d="M0 0 H10.5 L0 11Z" fill="#5ea2ee"/><path d="M20.5 15 V20 H15Z" fill="#5ea2ee"/><path d="M0 11 L11 0 H20.5 V6 H8 V12 H0Z" fill="#ef85b0"/><path d="M0 12 H8 V15 H20.5 L15.5 20 H0Z" fill="#f5874a"/><rect x="8" y="6" width="11.5" height="8.5" fill="#7f7f80"/><circle cx="12" cy="9" r="1.3" fill="#e27a9a"/></svg>
<div class="t" style="left:472px;top:431.47px;font-size:7.96px;color:#747577;font-weight:bold;transform:scaleX(1.098);transform-origin:0 0;-webkit-text-stroke:0;">Dagger in Kotlin: Gotchas and</div>
<div class="t" style="left:472px;top:441.07px;font-size:7.96px;color:#747577;font-weight:bold;transform:scaleX(1.217);transform-origin:0 0;-webkit-text-stroke:0;">Optimizations</div>
<div class="t" style="left:472px;top:452.35px;font-size:7.27px;color:#98999b;transform:scaleX(1.091);transform-origin:0 0;-webkit-text-stroke:0;">Manuel Vivo · 3 min read</div>
<svg class="r" style="left:611px;top:437px;" width="8" height="10" viewBox="0 0 8 10"><path d="M0.7 0.7 H7.3 V9.3 L4 6.8 L0.7 9.3Z" fill="none" stroke="#7e7f81" stroke-width="0.95"/></svg>
<div class="t" style="left:442.6px;top:478.65px;font-size:8.09px;color:#747577;font-weight:bold;transform:scaleX(1.079);transform-origin:0 0;-webkit-text-stroke:0;">Popular on Jetnews</div>
<svg class="r" style="left:442px;top:499px" width="145" height="49" viewBox="0 0 145 49"><rect x="42.5" y="7.5" width="59.5" height="30" rx="5" fill="#606163"/><rect x="47" y="9.5" width="50" height="26" fill="#f2f2f2"/><circle cx="56" cy="8" r="4" fill="#5fc35f"/><path d="M85 19 H77 M80 16 L77 19 L80 22" stroke="#5fc35f" stroke-width="1.5" fill="none"/><rect x="14.199999999999989" y="36.5" width="6" height="12.5" fill="#68c868"/><path d="M14.199999999999989 37 L13.699999999999989 29 Q13.699999999999989 23 17.19999999999999 23 Q20.69999999999999 23 20.69999999999999 29 L20.19999999999999 37Z" fill="#b3897a"/><circle cx="17.49999999999999" cy="28" r="1.6" fill="#e4d4cc"/><rect x="29.399999999999977" y="36.5" width="6" height="12.5" fill="#68c868"/><path d="M29.399999999999977 37 L28.899999999999977 29 Q28.899999999999977 23 32.39999999999998 23 Q35.89999999999998 23 35.89999999999998 29 L35.39999999999998 37Z" fill="#b3897a"/><circle cx="32.699999999999974" cy="28" r="1.6" fill="#e4d4cc"/><rect x="45" y="36.5" width="6" height="12.5" fill="#68c868"/><path d="M45 37 L44.5 29 Q44.5 23 48 23 Q51.5 23 51.5 29 L51 37Z" fill="#b3897a"/><circle cx="48.3" cy="28" r="1.6" fill="#e4d4cc"/><rect x="61.80000000000001" y="36.5" width="6" height="12.5" fill="#68c868"/><path d="M61.80000000000001 37 L61.30000000000001 29 Q61.30000000000001 23 64.80000000000001 23 Q68.30000000000001 23 68.30000000000001 29 L67.80000000000001 37Z" fill="#b3897a"/><circle cx="65.10000000000001" cy="28" r="1.6" fill="#e4d4cc"/><rect x="77.39999999999998" y="36.5" width="6" height="12.5" fill="#68c868"/><path d="M77.39999999999998 37 L76.89999999999998 29 Q76.89999999999998 23 80.39999999999998 23 Q83.89999999999998 23 83.89999999999998 29 L83.39999999999998 37Z" fill="#b3897a"/><circle cx="80.69999999999997" cy="28" r="1.6" fill="#e4d4cc"/><rect x="94" y="36.5" width="6" height="12.5" fill="#68c868"/><path d="M94 37 L93.5 29 Q93.5 23 97 23 Q100.5 23 100.5 29 L100 37Z" fill="#b3897a"/><circle cx="97.3" cy="28" r="1.6" fill="#e4d4cc"/><rect x="110.5" y="36.5" width="6" height="12.5" fill="#68c868"/><path d="M110.5 37 L110.0 29 Q110.0 23 113.5 23 Q117.0 23 117.0 29 L116.5 37Z" fill="#b3897a"/><circle cx="113.8" cy="28" r="1.6" fill="#e4d4cc"/><rect x="126" y="36.5" width="6" height="12.5" fill="#68c868"/><path d="M126 37 L125.5 29 Q125.5 23 129 23 Q132.5 23 132.5 29 L132 37Z" fill="#b3897a"/><circle cx="129.3" cy="28" r="1.6" fill="#e4d4cc"/></svg>
<svg class="r" style="left:594.5px;top:496px" width="32" height="51" viewBox="0 0 32 51"><rect width="32" height="51" fill="#6aa3ec"/><rect x="0.5" y="0.5" width="31" height="50" fill="none" stroke="#a9ccf5" stroke-width="1"/><rect x="5" y="6" width="13" height="26" rx="2" fill="#8dbaf0"/><rect x="7" y="9" width="9" height="7" fill="#5b95e0"/><path d="M8 20h7M8 23h7" stroke="#5b95e0" stroke-width="1.2"/><rect x="20" y="6" width="10" height="16" fill="#4f88d8"/><path d="M21.5 9h7M21.5 12h7M21.5 15h7M21.5 18h7" stroke="#8dbaf0" stroke-width="0.8"/><path d="M23 28 L27 32 L23 36 L19 32Z" fill="#a9ccf5"/><rect x="2" y="37" width="13" height="12" fill="#a9ccf5"/><path d="M6 40h7M6 43h7M6 46h5" stroke="#6aa3ec" stroke-width="0.9"/><circle cx="22" cy="43" r="4.5" fill="#a9ccf5"/><circle cx="22" cy="43" r="2" fill="#4f88d8"/></svg>
<svg class="r" style="left:429px;top:201px;" width="16" height="22" viewBox="0 0 16 22"><circle cx="8" cy="7.8" r="6.5" fill="none" stroke="#a0a0a0" stroke-width="1"/><path d="M7 10.3 L7 19.5 L9 17.5 L10.8 21 L12.2 20.2 L10.5 16.8 L13.2 16.5Z" fill="#111" stroke="#e8e8e8" stroke-width="0.5"/></svg>
<div class="r" style="left:434px;top:548px;width:201.5px;height:24.5px;background:#5a5b5c;"></div>
<div class="r" style="left:434px;top:572px;width:201.5px;height:1px;background:#8a8c8e;"></div>
<div class="r" style="left:434px;top:548px;width:201.5px;height:79px;box-sizing:border-box;border:1px solid #7d8083;border-top:none;"></div>
<div class="r" style="left:442px;top:548px;width:144.5px;height:70.5px;box-sizing:border-box;border:1px solid #7d8083;border-top:none;"></div>
<div class="r" style="left:450.5px;top:554.3px;width:128px;height:46.5px;box-sizing:border-box;border:1px solid #7d8083;"></div>
<div class="r" style="left:450.5px;top:580.5px;width:128px;height:1px;background:#55585a;"></div>
<div class="r" style="left:450.5px;top:590px;width:71px;height:1px;background:#7d8083;"></div>
<div class="r" style="left:521.5px;top:590px;width:57px;height:1px;background:#55585a;"></div>
<div class="r" style="left:521.5px;top:581px;width:1px;height:9px;background:#7d8083;"></div>
<div class="r" style="left:518.5px;top:590px;width:1px;height:10px;background:#7d8083;"></div>
<div class="r" style="left:627.5px;top:548px;width:1px;height:78px;background:#6a6d70;"></div>
<div class="r" style="left:782px;top:532px;width:21.5px;height:22px;background:#36393c;border-radius:4px"></div>
<div class="r" style="left:782px;top:558px;width:21.5px;height:22px;background:#36393c;border-radius:4px"></div>
<div class="r" style="left:782px;top:583px;width:21.5px;height:61px;background:#36393c;border-radius:4px"></div>
<svg class="r" style="left:786px;top:536px;" width="14" height="14" viewBox="0 0 14 14"><path d="M4 13 Q1 9 2 7 L3.5 7 L4.5 9 V2.5 A0.9 0.9 0 0 1 6.2 2.5 V6.5 V1.5 A0.9 0.9 0 0 1 7.9 1.5 V6.5 V2 A0.9 0.9 0 0 1 9.6 2 V6.5 V3.5 A0.9 0.9 0 0 1 11.3 3.5 V9 Q11.3 12 9.5 13Z" fill="#c8c8c8"/></svg>
<svg class="r" style="left:786px;top:562px;" width="14" height="14" viewBox="0 0 14 14"><rect x="5" y="2" width="7.5" height="10" fill="none" stroke="#c8c8c8" stroke-width="1.2"/><path d="M1.5 3.5 L4.5 2 V12 L1.5 10.5Z" fill="#c8c8c8"/></svg>
<svg class="r" style="left:787px;top:588px;" width="12" height="12" viewBox="0 0 12 12"><path d="M6 1.5v9M1.5 6h9" stroke="#d0d0d0" stroke-width="1.6"/></svg>
<div class="r" style="left:788px;top:612px;width:9px;height:1.6px;background:#c8c8c8;"></div>
<svg class="r" style="left:786.5px;top:626px;" width="12" height="12" viewBox="0 0 12 12"><rect x="0.7" y="0.7" width="10.6" height="10.6" fill="none" stroke="#c8c8c8" stroke-width="1.2"/><path d="M3 8 L9 3M3 8 h3M3 8 v-3M9 3 h-3M9 3 v3" stroke="#c8c8c8" stroke-width="1.1" fill="none"/></svg>
<svg class="r" style="left:817px;top:108.5px;" width="11" height="10" viewBox="0 0 11 10"><rect x="0" y="0" width="10.5" height="9.5" fill="#8fa2b0"/><path d="M1.5 8 L3.5 5 L5 6.5 L7 4 L9 8Z" fill="#2d2f32"/></svg>
<div class="t" style="left:831px;top:110.23px;font-size:7.41px;color:#707376;transform:scaleX(1.363);transform-origin:0 0;-webkit-text-stroke:0;">image</div>
<div class="t" style="left:823.2px;top:126.33px;font-size:8.35px;color:#bdbdbd;">x</div>
<div class="t" style="left:926.3px;top:125.37px;font-size:10.2px;color:#bdbdbd;">16dp</div>
<div class="r" style="left:820px;top:139.20000000000002px;width:259px;height:1px;background:#25282a;"></div>
<div class="t" style="left:823.2px;top:144.13px;font-size:8.35px;color:#bdbdbd;">y</div>
<div class="t" style="left:926.3px;top:143.17px;font-size:10.2px;color:#bdbdbd;">158dp</div>
<div class="r" style="left:820px;top:157.00000000000003px;width:259px;height:1px;background:#25282a;"></div>
<div class="t" style="left:823.2px;top:161.93px;font-size:8.35px;color:#bdbdbd;">width</div>
<div class="t" style="left:926.3px;top:160.97px;font-size:10.2px;color:#bdbdbd;">360dp</div>
<div class="r" style="left:820px;top:174.8px;width:259px;height:1px;background:#25282a;"></div>
<div class="t" style="left:823.2px;top:179.73px;font-size:8.35px;color:#bdbdbd;">height</div>
<div class="t" style="left:926.3px;top:178.77px;font-size:10.2px;color:#bdbdbd;">180dp</div>
<div class="r" style="left:820px;top:192.60000000000002px;width:259px;height:1px;background:#25282a;"></div>
<div class="r" style="left:815px;top:196px;width:264px;height:18px;background:#35383b;"></div>
<svg class="r" style="left:819.5px;top:202.8px;" width="7" height="5" viewBox="0 0 7 5"><path d="M0.6 0.6 L3.3 3.6 L6 0.6" stroke="#c0c0c0" stroke-width="1.1" fill="none"/></svg>
<div class="t" style="left:828.3px;top:200.97px;font-size:10.2px;color:#c8c8c8;font-weight:bold;">All Attributes</div>
<div class="t" style="left:823.2px;top:218.83px;font-size:8.35px;color:#bdbdbd;">alignment</div>
<div class="t" style="left:926.3px;top:218.57px;font-size:10.2px;color:#bdbdbd;">Center</div>
<div class="r" style="left:815px;top:231.70000000000002px;width:264px;height:1px;background:#25282a;"></div>
<div class="t" style="left:823.2px;top:236.68px;font-size:8.35px;color:#bdbdbd;">alpha</div>
<div class="t" style="left:926.3px;top:235.75px;font-size:10.4px;color:#bdbdbd;">1.0</div>
<div class="r" style="left:815px;top:249.55px;width:264px;height:1px;background:#25282a;"></div>
<div class="t" style="left:823.2px;top:254.53px;font-size:8.35px;color:#bdbdbd;">contentScale</div>
<div class="t" style="left:926.3px;top:254.27px;font-size:10.2px;color:#bdbdbd;">Crop</div>
<div class="r" style="left:815px;top:267.4px;width:264px;height:1px;background:#25282a;"></div>
<svg class="r" style="left:817px;top:274.35px;" width="7" height="5" viewBox="0 0 7 5"><path d="M0.6 0.6 L3.3 3.6 L6 0.6" stroke="#b5b5b5" stroke-width="1.1" fill="none"/></svg>
<div class="t" style="left:825px;top:272.38px;font-size:8.35px;color:#bdbdbd;">modifier</div>
<div class="r" style="left:815px;top:285.25px;width:264px;height:1px;background:#25282a;"></div>
<svg class="r" style="left:822.7px;top:290.70000000000005px;" width="5" height="7" viewBox="0 0 5 7"><path d="M0.6 0.6 L3.6 3.3 L0.6 6" stroke="#b5b5b5" stroke-width="1.1" fill="none"/></svg>
<div class="t" style="left:829.7px;top:290.23px;font-size:8.35px;color:#bdbdbd;">heightIn</div>
<div class="r" style="left:815px;top:303.1px;width:264px;height:1px;background:#25282a;"></div>
<svg class="r" style="left:821.7px;top:310.05px;" width="7" height="5" viewBox="0 0 7 5"><path d="M0.6 0.6 L3.3 3.6 L6 0.6" stroke="#b5b5b5" stroke-width="1.1" fill="none"/></svg>
<div class="t" style="left:829.7px;top:308.08px;font-size:8.35px;color:#bdbdbd;">fillMaxWidth</div>
<div class="r" style="left:815px;top:320.95px;width:264px;height:1px;background:#25282a;"></div>
<div class="t" style="left:835.5px;top:325.93px;font-size:8.35px;color:#bdbdbd;">fraction</div>
<div class="t" style="left:926.3px;top:325.00px;font-size:10.4px;color:#bdbdbd;">1.0</div>
<div class="r" style="left:815px;top:338.8px;width:264px;height:1px;background:#25282a;"></div>
<svg class="r" style="left:821.7px;top:345.75px;" width="7" height="5" viewBox="0 0 7 5"><path d="M0.6 0.6 L3.3 3.6 L6 0.6" stroke="#b5b5b5" stroke-width="1.1" fill="none"/></svg>
<div class="t" style="left:829.7px;top:343.78px;font-size:8.35px;color:#bdbdbd;">graphicsLayer</div>
<div class="r" style="left:815px;top:356.65px;width:264px;height:1px;background:#25282a;"></div>
<div class="t" style="left:835.5px;top:361.63px;font-size:8.35px;color:#bdbdbd;">scaleX</div>
<div class="t" style="left:926.3px;top:360.70px;font-size:10.4px;color:#bdbdbd;">1.0</div>
<div class="r" style="left:815px;top:374.5px;width:264px;height:1px;background:#25282a;"></div>
<div class="t" style="left:835.5px;top:379.48px;font-size:8.35px;color:#bdbdbd;">scaleY</div>
<div class="t" style="left:926.3px;top:378.55px;font-size:10.4px;color:#bdbdbd;">1.0</div>
<div class="r" style="left:815px;top:392.35px;width:264px;height:1px;background:#25282a;"></div>
<div class="t" style="left:835.5px;top:397.33px;font-size:8.35px;color:#bdbdbd;">alpha</div>
<div class="t" style="left:926.3px;top:396.40px;font-size:10.4px;color:#bdbdbd;">1.0</div>
<div class="r" style="left:815px;top:410.2px;width:264px;height:1px;background:#25282a;"></div>
<div class="t" style="left:835.5px;top:415.18px;font-size:8.35px;color:#bdbdbd;">translationX</div>
<div class="t" style="left:926.3px;top:414.25px;font-size:10.4px;color:#bdbdbd;">0.0</div>
<div class="r" style="left:815px;top:428.05px;width:264px;height:1px;background:#25282a;"></div>
<div class="t" style="left:835.5px;top:433.03px;font-size:8.35px;color:#bdbdbd;">translationY</div>
<div class="t" style="left:926.3px;top:432.10px;font-size:10.4px;color:#bdbdbd;">0.0</div>
<div class="r" style="left:815px;top:445.9px;width:264px;height:1px;background:#25282a;"></div>
<div class="t" style="left:835.5px;top:450.88px;font-size:8.35px;color:#bdbdbd;">shadowElevation</div>
<div class="t" style="left:926.3px;top:449.95px;font-size:10.4px;color:#bdbdbd;">0.0</div>
<div class="r" style="left:815px;top:463.75px;width:264px;height:1px;background:#25282a;"></div>
<div class="t" style="left:835.5px;top:468.73px;font-size:8.35px;color:#bdbdbd;">rotationX</div>
<div class="t" style="left:926.3px;top:467.80px;font-size:10.4px;color:#bdbdbd;">0.0</div>
<div class="r" style="left:815px;top:481.6px;width:264px;height:1px;background:#25282a;"></div>
<div class="t" style="left:835.5px;top:486.58px;font-size:8.35px;color:#bdbdbd;">rotationY</div>
<div class="t" style="left:926.3px;top:485.65px;font-size:10.4px;color:#bdbdbd;">0.0</div>
<div class="r" style="left:815px;top:499.45px;width:264px;height:1px;background:#25282a;"></div>
<div class="t" style="left:835.5px;top:504.43px;font-size:8.35px;color:#bdbdbd;">rotationZ</div>
<div class="t" style="left:926.3px;top:503.50px;font-size:10.4px;color:#bdbdbd;">0.0</div>
<div class="r" style="left:815px;top:517.3000000000001px;width:264px;height:1px;background:#25282a;"></div>
<div class="t" style="left:835.5px;top:522.28px;font-size:8.35px;color:#bdbdbd;">cameraDistance</div>
<div class="t" style="left:926.3px;top:521.35px;font-size:10.4px;color:#bdbdbd;">8.0</div>
<div class="r" style="left:815px;top:535.15px;width:264px;height:1px;background:#25282a;"></div>
<div class="t" style="left:835.5px;top:540.13px;font-size:8.35px;color:#bdbdbd;">transformOrigin</div>
<div class="t" style="left:926.3px;top:539.87px;font-size:10.2px;color:#bdbdbd;">Center</div>
<div class="r" style="left:815px;top:553.0px;width:264px;height:1px;background:#25282a;"></div>
<svg class="r" style="left:828.5px;top:558.45px;" width="5" height="7" viewBox="0 0 5 7"><path d="M0.6 0.6 L3.6 3.3 L0.6 6" stroke="#b5b5b5" stroke-width="1.1" fill="none"/></svg>
<div class="t" style="left:835.5px;top:557.98px;font-size:8.35px;color:#bdbdbd;">shape</div>
<div class="t" style="left:926.3px;top:557.72px;font-size:10.2px;color:#bdbdbd;">RoundedCornerShape</div>
<div class="r" style="left:815px;top:570.85px;width:264px;height:1px;background:#25282a;"></div>
<div class="t" style="left:835.5px;top:575.83px;font-size:8.35px;color:#bdbdbd;">clip</div>
<div class="t" style="left:926.3px;top:575.57px;font-size:10.2px;color:#bdbdbd;">true</div>
<div class="r" style="left:815px;top:588.6999999999999px;width:264px;height:1px;background:#25282a;"></div>
<svg class="r" style="left:816.2px;top:594.1500000000001px;" width="5" height="7" viewBox="0 0 5 7"><path d="M0.6 0.6 L3.6 3.3 L0.6 6" stroke="#b5b5b5" stroke-width="1.1" fill="none"/></svg>
<div class="t" style="left:823.2px;top:593.68px;font-size:8.35px;color:#bdbdbd;">painter</div>
<div class="t" style="left:926.3px;top:593.42px;font-size:10.2px;color:#bdbdbd;">BitmapPainter</div>
<div class="r" style="left:815px;top:606.5500000000001px;width:264px;height:1px;background:#25282a;"></div>
<div class="r" style="left:0px;top:657px;width:1079px;height:1px;background:#353739;"></div>
<svg class="r" style="left:2px;top:661px;" width="12" height="8" viewBox="0 0 12 8"><rect x="0.5" y="0.5" width="11" height="7" fill="none" stroke="#b0b0b0" stroke-width="1"/><path d="M3 0.5v7M9 0.5v7" stroke="#b0b0b0" stroke-width="1"/></svg>
<div class="t" style="left:21.8px;top:661.23px;font-size:8.35px;color:#bbbbbb;">Launch succeeded (17 minutes ago)</div>
<div class="t" style="left:877px;top:661.39px;font-size:8.4px;color:#bbbbbb;">1:1</div>
<div class="t" style="left:895px;top:661.39px;font-size:8.4px;color:#bbbbbb;">LF</div>
<div class="t" style="left:913px;top:661.33px;font-size:8.47px;color:#bbbbbb;">UTF-8</div>
<div class="t" style="left:946.3px;top:661.30px;font-size:8.5px;color:#bbbbbb;">4 spaces</div>
<svg class="r" style="left:988px;top:660px;" width="10" height="10" viewBox="0 0 10 10"><path d="M2.5 4 V2.5 A2.2 2.2 0 0 1 6.9 2.5" stroke="#c0c0c0" stroke-width="1.2" fill="none"/><rect x="3" y="4.5" width="6.5" height="5" fill="#c0c0c0"/></svg>
<svg class="r" style="left:1006px;top:660px;" width="10" height="10" viewBox="0 0 10 10"><path d="M5 0.8 A4.2 4 0 1 1 2 8 L0.8 9.5 L1.5 6.5 A4.2 4 0 0 1 5 0.8Z" fill="none" stroke="#c0c0c0" stroke-width="1.1"/></svg>
<svg class="r" style="left:1026px;top:660px;" width="10" height="10" viewBox="0 0 10 10"><path d="M0.5 2 L3 4.5M1.5 0.8 L4 3.3M0.5 4.5 L2 6" stroke="#3592c4" stroke-width="1.1"/><path d="M3.5 8 L8.5 3 L9.5 4 L4.5 9 L3 9.5Z" fill="#c0c0c0"/></svg>
<svg class="r" style="left:1044px;top:659px;" width="12" height="12" viewBox="0 0 12 12"><circle cx="6" cy="6" r="5.5" fill="#c0c0c0"/><circle cx="4" cy="4.8" r="0.9" fill="#3c3f41"/><circle cx="8" cy="4.8" r="0.9" fill="#3c3f41"/><path d="M3.5 7.3 Q6 9.5 8.5 7.3" stroke="#3c3f41" stroke-width="1" fill="none"/></svg>
<svg class="r" style="left:1062px;top:659px;" width="12" height="12" viewBox="0 0 12 12"><circle cx="6" cy="6" r="5.5" fill="#c0c0c0"/><circle cx="4" cy="4.8" r="0.9" fill="#3c3f41"/><circle cx="8" cy="4.8" r="0.9" fill="#3c3f41"/><path d="M3.5 8.2 H8.5" stroke="#3c3f41" stroke-width="1" fill="none"/></svg>
</body></html>
